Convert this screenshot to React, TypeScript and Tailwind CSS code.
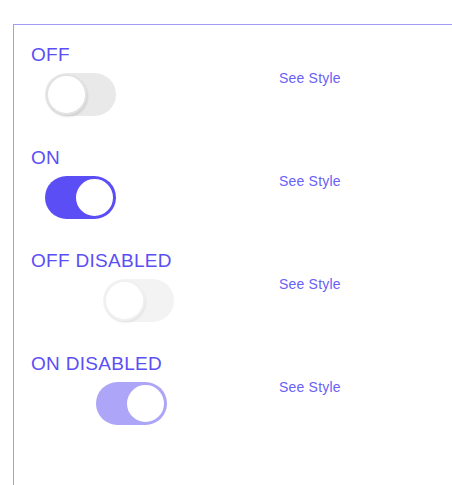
import React from "react";

// ─── Toggle ──────────────────────────────────────────────────────────────────

interface ToggleProps {
  on: boolean;
  disabled?: boolean;
  className?: string;
}

function Toggle({ on, disabled = false, className = "" }: ToggleProps) {
  const track = on
    ? disabled
      ? "bg-[#aca5f8]"
      : "bg-[#5b4ef5]"
    : disabled
      ? "bg-[#f3f3f3]"
      : "bg-[#e9e9e9]";

  const knob = on
    ? disabled
      ? "border-[#aca5f8]"
      : "border-[#5b4ef5]"
    : disabled
      ? "border-[#f0f0f0] shadow-[1px_2px_2px_rgba(0,0,0,0.06)]"
      : "border-[#e2e2e2] shadow-[1px_2px_2px_rgba(0,0,0,0.10)]";

  return (
    <div
      className={[
        "flex h-[43px] w-[71px] items-center rounded-full p-px",
        on ? "justify-end" : "justify-start",
        track,
        className,
      ].join(" ")}
    >
      <span
        className={["block h-[41px] w-[41px] rounded-full border-[2px] bg-white", knob].join(" ")}
      />
    </div>
  );
}

// ─── Row ─────────────────────────────────────────────────────────────────────

interface RowProps {
  label: string;
  on: boolean;
  disabled?: boolean;
  offset: string;
}

function Row({ label, on, disabled, offset }: RowProps) {
  return (
    <div className="flex h-[103px]">
      <div className="w-[248px]">
        <div className="text-[19px] leading-[22px] tracking-[0.3px] text-[#5b4ef5]">{label}</div>
        <Toggle on={on} disabled={disabled} className={`mt-[7px] ${offset}`} />
      </div>
      <div className="pt-[26px] text-[14px] leading-[17px] tracking-[0.2px] text-[#6a5ff6]">
        See Style
      </div>
    </div>
  );
}

export default function App() {
  return (
    <div className="h-[485px] w-[452px] overflow-hidden bg-white font-['Liberation_Sans',Arial,sans-serif]">
      <div className="ml-[13px] mt-[24px] h-[600px] w-[600px] border-l border-t border-[#a49bf8] pl-[17px] pt-[19px]">
        <Row label="OFF" on={false} offset="ml-[14px]" />
        <Row label="ON" on offset="ml-[14px]" />
        <Row label="OFF DISABLED" on={false} disabled offset="ml-[72px]" />
        <Row label="ON DISABLED" on disabled offset="ml-[65px]" />
      </div>
    </div>
  );
}
